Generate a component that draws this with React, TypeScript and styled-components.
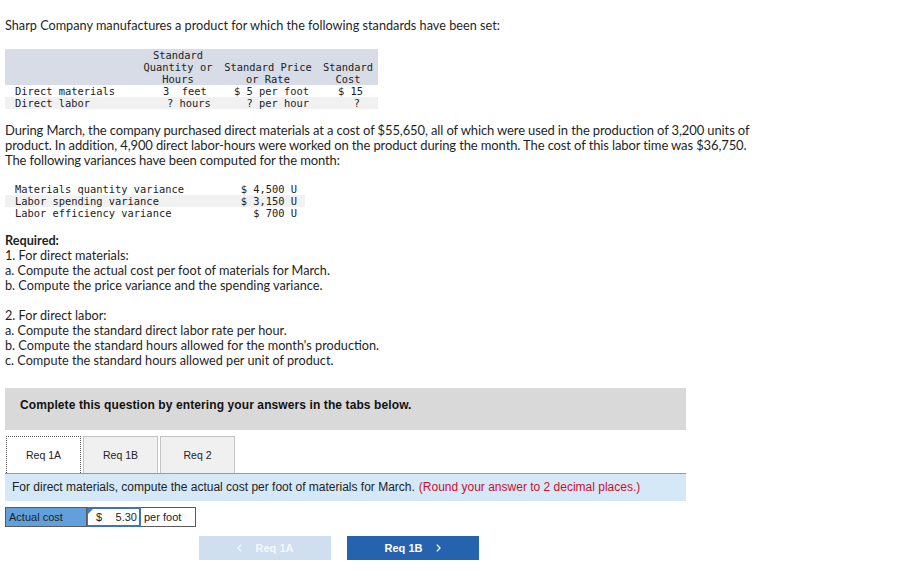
import styled, { createGlobalStyle } from "styled-components";

const GlobalStyle = createGlobalStyle`
  body {
    margin: 0;
    background: #ffffff;
  }
`;

const Page = styled.div`
  width: 910px;
  padding: 18px 5px 20px;
  font-family: Lato, "Open Sans", sans-serif;
  font-size: 12.7px;
  line-height: 15px;
  color: #1f1f1f;
`;

const Text = styled.p<{ $top?: number }>`
  margin: ${(p) => p.$top ?? 0}px 0 0;
`;

const Narrow = styled(Text)`
  font-size: 13px;
  letter-spacing: -0.12px;
`;

const MonoTable = styled.div<{ $cols: string; $top: number; $width: number }>`
  margin-top: ${(p) => p.$top}px;
  width: ${(p) => p.$width}px;
  display: grid;
  grid-template-columns: ${(p) => p.$cols};
  font-family: "DejaVu Sans Mono", "Liberation Mono", monospace;
  font-size: 10.4px;
  line-height: 12px;
  color: #222;
  white-space: pre;
`;

const Row = styled.div<{ $bg?: string }>`
  display: contents;
  & > div {
    background: ${(p) => p.$bg ?? "transparent"};
  }
`;

const Cell = styled.div<{ $align?: string; $pl?: number; $pr?: number }>`
  text-align: ${(p) => p.$align ?? "left"};
  padding-left: ${(p) => p.$pl ?? 0}px;
  padding-right: ${(p) => p.$pr ?? 0}px;
  display: flex;
  flex-direction: column;
  justify-content: flex-end;
`;

const Bold = styled.div`
  font-weight: 700;
`;

const Gap = styled.div`
  height: 15px;
`;

const Banner = styled.div`
  margin-top: 20px;
  width: 681px;
  height: 42px;
  box-sizing: border-box;
  padding: 11px 15px;
  background: #d9d9d9;
  font-family: "Liberation Sans", Arial, sans-serif;
  font-weight: 700;
  font-size: 12px;
  letter-spacing: 0.1px;
  line-height: 13px;
  color: #111;
`;

const TabBar = styled.div`
  margin-top: 6px;
  width: 681px;
  display: flex;
  gap: 2px;
  padding-left: 1px;
  box-sizing: border-box;
  border-bottom: 1px solid #9a9a9a;
`;

const Tab = styled.div<{ $active?: boolean }>`
  width: 75px;
  height: 37px;
  box-sizing: border-box;
  display: flex;
  align-items: center;
  justify-content: center;
  font-family: "Liberation Sans", Arial, sans-serif;
  font-size: 10.5px;
  color: #222;
  background: ${(p) => (p.$active ? "#ffffff" : "#f0f0f0")};
  border: ${(p) => (p.$active ? "1px dotted #555" : "1px solid #c4c4c4")};
  border-bottom: none;
  margin-bottom: ${(p) => (p.$active ? "-1px" : "0")};
`;

const Instruction = styled.div`
  width: 681px;
  height: 27px;
  box-sizing: border-box;
  padding: 0 7px;
  display: flex;
  align-items: center;
  background: #d5e8f7;
  font-family: "Liberation Sans", Arial, sans-serif;
  font-size: 12px;
  color: #222;
`;

const Red = styled.span`
  color: #c8102e;
  margin-left: 4px;
`;

const AnswerRow = styled.div`
  margin-top: 6px;
  display: flex;
  height: 20px;
  font-family: "Liberation Sans", Arial, sans-serif;
  font-size: 11px;
  color: #222;
`;

const AnswerLabel = styled.div`
  width: 82px;
  box-sizing: border-box;
  border: 1px solid #5a5a5a;
  background: #62a0dc;
  padding-left: 3px;
  display: flex;
  align-items: center;
`;

const AnswerInput = styled.div`
  position: relative;
  width: 54px;
  box-sizing: border-box;
  border: 2px solid #3d74b4;
  border-left-width: 1px;
  background: #fff;
  display: flex;
  align-items: center;
  justify-content: space-between;
  padding: 0 2px 0 8px;
`;

const Marker = styled.span`
  position: absolute;
  left: 0;
  top: 0;
  width: 0;
  height: 0;
  border-top: 5px solid #3a7fd0;
  border-right: 5px solid transparent;
`;

const Unit = styled.div`
  width: 55px;
  box-sizing: border-box;
  border: 1px solid #5a5a5a;
  border-left: none;
  background: #fff;
  padding-left: 3px;
  display: flex;
  align-items: center;
`;

const Nav = styled.div`
  margin-top: 9px;
  padding-left: 194px;
  display: flex;
  gap: 16px;
`;

const NavButton = styled.div<{ $disabled?: boolean }>`
  width: 132px;
  height: 24px;
  display: flex;
  align-items: center;
  justify-content: center;
  gap: 14px;
  font-family: "Liberation Sans", Arial, sans-serif;
  font-weight: 700;
  font-size: 11px;
  color: ${(p) => (p.$disabled ? "#f4f8fc" : "#ffffff")};
  background: ${(p) => (p.$disabled ? "#cfdff0" : "#2563ae")};
`;

const Chevron = ({ dir }: { dir: "left" | "right" }) => (
  <svg width="5" height="8" viewBox="0 0 5 8" fill="none">
    <polyline
      points={dir === "left" ? "4.2,0.6 1,4 4.2,7.4" : "0.8,0.6 4,4 0.8,7.4"}
      stroke="currentColor"
      strokeWidth="1.3"
    />
  </svg>
);

export default function App() {
  return (
    <>
      <GlobalStyle />
      <Page>
        <Text>Sharp Company manufactures a product for which the following standards have been set:</Text>

        <MonoTable $top={16} $width={373} $cols="133px 80px 100px 60px">
          <Row $bg="#d8dce6">
            <Cell />
            <Cell $align="center">{"Standard\nQuantity or\nHours"}</Cell>
            <Cell $align="center">{"Standard Price\nor Rate"}</Cell>
            <Cell $align="center">{"Standard\nCost"}</Cell>
          </Row>
          <Row>
            <Cell $pl={10}>Direct materials</Cell>
            <Cell $pl={25}>{"3  feet"}</Cell>
            <Cell $align="right" $pr={9}>$ 5 per foot</Cell>
            <Cell $align="right" $pr={15}>$ 15</Cell>
          </Row>
          <Row $bg="#f1f1f1">
            <Cell $pl={10}>Direct labor</Cell>
            <Cell $pl={29}>? hours</Cell>
            <Cell $align="right" $pr={9}>? per hour</Cell>
            <Cell $align="right" $pr={18}>?</Cell>
          </Row>
        </MonoTable>

        <Narrow $top={14}>
          During March, the company purchased direct materials at a cost of $55,650, all of which were used in the production of 3,200 units of
          <br />
          product. In addition, 4,900 direct labor-hours were worked on the product during the month. The cost of this labor time was $36,750.
          <br />
          The following variances have been computed for the month:
        </Narrow>

        <MonoTable $top={15} $width={300} $cols="200px 100px">
          <Row>
            <Cell $pl={10}>Materials quantity variance</Cell>
            <Cell $align="right" $pr={8}>$ 4,500 U</Cell>
          </Row>
          <Row $bg="#f1f1f1">
            <Cell $pl={10}>Labor spending variance</Cell>
            <Cell $align="right" $pr={8}>$ 3,150 U</Cell>
          </Row>
          <Row>
            <Cell $pl={10}>Labor efficiency variance</Cell>
            <Cell $align="right" $pr={8}>$ 700 U</Cell>
          </Row>
        </MonoTable>

        <Text $top={14} as="div">
          <Bold>Required:</Bold>
          <div>1. For direct materials:</div>
          <div>a. Compute the actual cost per foot of materials for March.</div>
          <div>b. Compute the price variance and the spending variance.</div>
          <Gap />
          <div>2. For direct labor:</div>
          <div>a. Compute the standard direct labor rate per hour.</div>
          <div>b. Compute the standard hours allowed for the month's production.</div>
          <div>c. Compute the standard hours allowed per unit of product.</div>
        </Text>

        <Banner>Complete this question by entering your answers in the tabs below.</Banner>

        <TabBar>
          <Tab $active>Req 1A</Tab>
          <Tab>Req 1B</Tab>
          <Tab>Req 2</Tab>
        </TabBar>

        <Instruction>
          For direct materials, compute the actual cost per foot of materials for March.
          <Red>(Round your answer to 2 decimal places.)</Red>
        </Instruction>

        <AnswerRow>
          <AnswerLabel>Actual cost</AnswerLabel>
          <AnswerInput>
            <Marker />
            <span>$</span>
            <span>5.30</span>
          </AnswerInput>
          <Unit>per foot</Unit>
        </AnswerRow>

        <Nav>
          <NavButton $disabled>
            <Chevron dir="left" />
            <span>Req 1A</span>
          </NavButton>
          <NavButton>
            <span>Req 1B</span>
            <Chevron dir="right" />
          </NavButton>
        </Nav>
      </Page>
    </>
  );
}
